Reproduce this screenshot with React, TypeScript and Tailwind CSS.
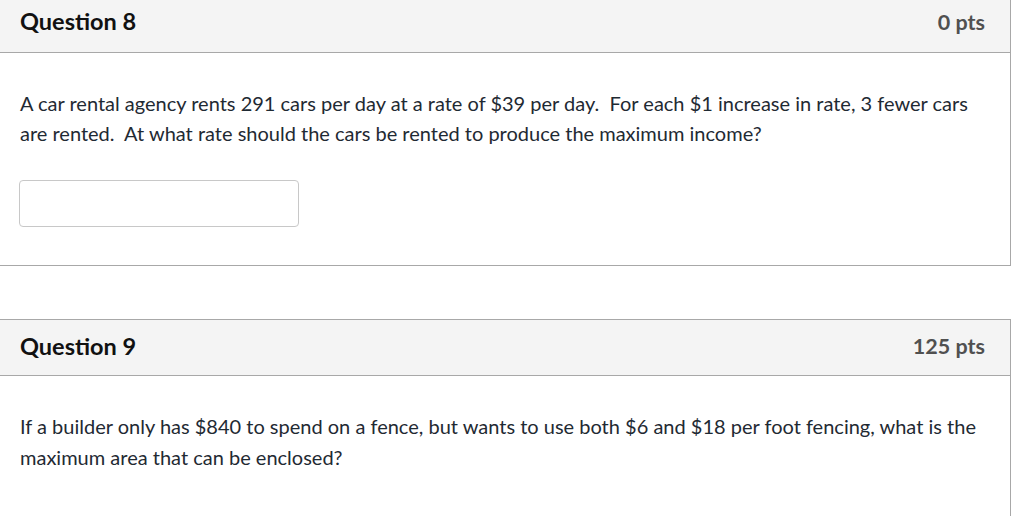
import React from "react";

function Panel({ title, pts, children, className, headerPad }: { title: string; pts: string; children: React.ReactNode; className?: string; headerPad: string }) {
  return (
    <div className={"ml-[-1px] w-[1012px] border border-[#a8a8a8] bg-white " + (className ?? "")}>
      <div className={"flex h-[56px] items-center justify-between border-b border-[#a8a8a8] bg-[#f4f4f4] pl-[20px] pr-[25px] " + headerPad}>
        <span className="text-[23.5px] font-bold text-[#111]">{title}</span>
        <span className="text-[21.5px] font-bold text-[#505050]">{pts}</span>
      </div>
      {children}
    </div>
  );
}

export default function App() {
  return (
    <div className="h-[516px] w-[1013px] overflow-hidden bg-white" style={{ fontFamily: "Lato, 'Noto Sans', sans-serif" }}>
      <Panel title="Question 8" pts="0 pts" className="mt-[-4px]" headerPad="pb-[5px]">
        <div className="px-[20px] pb-[38px] pt-[35px]">
          <p className="text-[20px] leading-[30px] text-[#1f2a33]">
            A car rental agency rents 291 cars per day at a rate of $39 per day.&nbsp; For each $1 increase in rate, 3 fewer cars are rented.&nbsp; At what rate should the cars be rented to produce the maximum income?
          </p>
          <div className="mt-[32px] h-[47px] w-[280px] ml-[-1px] rounded-[4px] border border-[#c8c8c8] bg-white"></div>
        </div>
      </Panel>
      <Panel title="Question 9" pts="125 pts" className="mt-[53px]" headerPad="pb-[2px]">
        <div className="px-[20px] pb-[80px] pt-[35px]">
          <p className="text-[20px] leading-[31px] text-[#1f2a33]">
            If a builder only has $840 to spend on a fence, but wants to use both $6 and $18 per foot fencing, what is the maximum area that can be enclosed?
          </p>
        </div>
      </Panel>
    </div>
  );
}
